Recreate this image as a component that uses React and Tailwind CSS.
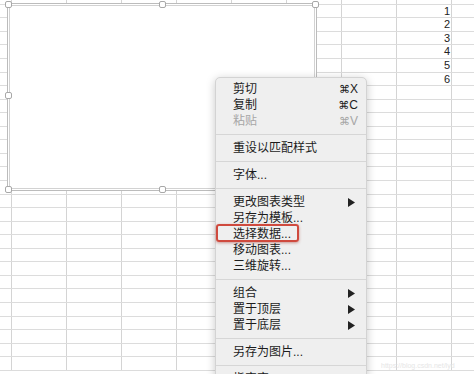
import React from "react";

const ROW_H = ["h-[13px]", "h-[14px]", "h-[13px]", "h-[14px]", "h-[14px]", "h-[13px]", "h-[14px]", "h-[13px]", "h-[14px]", "h-[13px]", "h-[14px]", "h-[13px]", "h-[14px]", "h-[14px]", "h-[13px]", "h-[14px]", "h-[13px]", "h-[14px]", "h-[13px]", "h-[14px]", "h-[13px]", "h-[14px]", "h-[14px]", "h-[13px]", "h-[14px]", "h-[13px]", "h-[14px]", "h-[13px]"];

const FONT = { fontFamily: '"Liberation Sans", "Noto Sans CJK SC", "DejaVu Sans", sans-serif' };

function Grid() {
  const rows = [];
  rows.push(
    <div key="top" className="flex h-[5px] border-b border-[#dcdcdc]">
      <div className="w-[12px] shrink-0 border-r border-[#d4d4d4]" />
      {Array.from({ length: 8 }).map((_, c) => (
        <div key={c} className="w-[55px] shrink-0 border-r border-[#d4d4d4]" />
      ))}
      <div className="flex-1" />
    </div>
  );
  ROW_H.slice(0, 27).forEach((h, r) => {
    rows.push(
      <div key={r} className={`flex ${h} border-b border-[#dcdcdc]`}>
        <div className="w-[12px] shrink-0 border-r border-[#d4d4d4]" />
        {Array.from({ length: 8 }).map((_, c) => (
          <div
            key={c}
            className="w-[55px] shrink-0 border-r border-[#d4d4d4] flex items-center justify-end pr-[1px] text-[11px] leading-none text-[#222]"
            style={FONT}
          >
            {c === 7 && r < 6 ? String(r + 1) : null}
          </div>
        ))}
        <div className="flex-1" />
      </div>
    );
  });
  return <div className="flex flex-col">{rows}</div>;
}

function Handle({ pos }) {
  return (
    <div
      className={`absolute w-[7px] h-[7px] bg-white border border-[#a8a8a8] rounded-[2px] ${pos}`}
    />
  );
}

function Chart() {
  return (
    <div className="absolute left-[7px] top-[3px] w-[310px] h-[188px] border border-[#bcbcbc] bg-white p-[1px]">
      <div className="w-full h-full border border-[#d2d2d2] bg-white" />
      <Handle pos="-left-[3px] -top-[3px]" />
      <Handle pos="left-[151px] -top-[3px]" />
      <Handle pos="-right-[3px] -top-[3px]" />
      <Handle pos="-left-[3px] top-[88px]" />
      <Handle pos="-right-[3px] top-[88px]" />
      <Handle pos="-left-[3px] -bottom-[3px]" />
      <Handle pos="left-[151px] -bottom-[3px]" />
      <Handle pos="-right-[3px] -bottom-[3px]" />
    </div>
  );
}

function Arrow() {
  return (
    <svg width="7" height="9" viewBox="0 0 7 9" className="mr-[3px]">
      <polygon points="0,0 7,4.5 0,9" fill="#222" />
    </svg>
  );
}

function Item({ label, shortcut, disabled, arrow, highlight }) {
  return (
    <div className="relative flex items-center h-[16px] pl-[17px] pr-[8px]">
      <span className={`flex-1 text-[12px] leading-none ${disabled ? "text-[#a6a6a6]" : "text-[#1c1c1c]"}`}>{label}</span>
      {shortcut && (
        <span className={`text-[12px] leading-none ${disabled ? "text-[#a6a6a6]" : "text-[#1c1c1c]"}`}>
          <span style={{ fontFamily: '"DejaVu Sans", sans-serif' }} className="text-[11px]">⌘</span>
          {shortcut}
        </span>
      )}
      {arrow && <Arrow />}
      {highlight && (
        <div className="absolute left-0 top-[-2px] w-[83px] h-[18px] rounded-[3px] border-2 border-[#cf4a3e] shadow-[0_1px_3px_rgba(160,40,30,0.45)]" />
      )}
    </div>
  );
}

function Sep() {
  return (
    <div className="h-[11px] flex items-center">
      <div className="w-full h-px bg-[#d6d6d6]" />
    </div>
  );
}

function Menu() {
  return (
    <div
      className="absolute left-[215px] top-[77px] w-[152px] h-[310px] bg-[#efefef] rounded-t-[5px] border border-[#d3d3d3] shadow-[0_2px_10px_rgba(0,0,0,0.22)] pt-[3px]"
      style={FONT}
    >
      <Item label="剪切" shortcut="X" />
      <Item label="复制" shortcut="C" />
      <Item label="粘贴" shortcut="V" disabled />
      <Sep />
      <Item label="重设以匹配样式" />
      <Sep />
      <Item label="字体..." />
      <Sep />
      <Item label="更改图表类型" arrow />
      <Item label="另存为模板..." />
      <Item label="选择数据..." highlight />
      <Item label="移动图表..." />
      <Item label="三维旋转..." />
      <Sep />
      <Item label="组合" arrow />
      <Item label="置于顶层" arrow />
      <Item label="置于底层" arrow />
      <Sep />
      <Item label="另存为图片..." />
      <Sep />
      <Item label="指定宏" />
    </div>
  );
}

export default function App() {
  return (
    <div className="relative w-[474px] h-[374px] overflow-hidden bg-white">
      <Grid />
      <Chart />
      <Menu />
      <div
        className="absolute left-[381px] top-[362px] text-[7px] leading-none text-[#e6e6e6] whitespace-nowrap"
        style={FONT}
      >
        https://blog.csdn.net/lyd
      </div>
    </div>
  );
}
